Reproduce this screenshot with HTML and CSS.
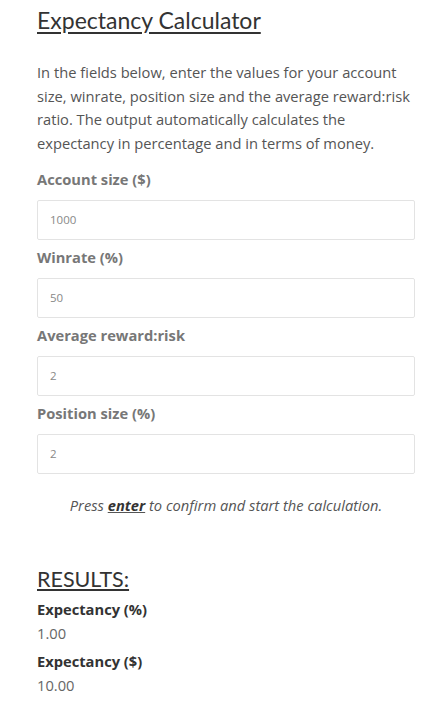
FILE: index.html
```html
<!DOCTYPE html>
<html>
<head>
  <title>Expectancy Calculator</title>
  <meta charset="UTF-8">
  <link rel="stylesheet" href="styles.css">
</head>
<body>
  <div class="container">
    <h1 class="title">Expectancy Calculator</h1>
    <p class="intro">In the fields below, enter the values for your account size, winrate, position size and the average reward:risk ratio. The output automatically calculates the expectancy in percentage and in terms of money.</p>
    <form id="calcForm">
      <label class="field-label" for="account">Account size ($)</label>
      <input type="text" class="field" id="account" value="1000">
      <label class="field-label" for="winrate">Winrate (%)</label>
      <input type="text" class="field" id="winrate" value="50">
      <label class="field-label" for="ratio">Average reward:risk</label>
      <input type="text" class="field" id="ratio" value="2">
      <label class="field-label" for="position">Position size (%)</label>
      <input type="text" class="field" id="position" value="2">
      <p class="hint">Press <u><b>enter</b></u> to confirm and start the calculation.</p>
    </form>
    <h2 class="results-title">RESULTS:</h2>
    <div class="result-label">Expectancy (%)</div>
    <div class="result-value" id="expPct">1.00</div>
    <div class="result-label">Expectancy ($)</div>
    <div class="result-value" id="expMoney">10.00</div>
  </div>

  <script>
    // Recalculate on enter
    document.getElementById('calcForm').addEventListener('submit', function(e) {
      e.preventDefault();
      const account = parseFloat(document.getElementById('account').value) || 0;
      const winrate = (parseFloat(document.getElementById('winrate').value) || 0) / 100;
      const ratio = parseFloat(document.getElementById('ratio').value) || 0;
      const position = parseFloat(document.getElementById('position').value) || 0;
      const pct = (winrate * ratio - (1 - winrate)) * position;
      document.getElementById('expPct').textContent = pct.toFixed(2);
      document.getElementById('expMoney').textContent = (account * pct / 100).toFixed(2);
    });
  </script>
</body>
</html>
```

FILE: styles.css
```css
body {
  font-family: 'Open Sans', 'Noto Sans', sans-serif;
  margin: 0;
  padding: 0;
  background-color: #ffffff;
  color: #555555;
}
.container {
  width: 378px;
  padding-left: 37px;
}
.title {
  font-family: Lato, 'Open Sans', sans-serif;
  font-size: 23px;
  font-weight: normal;
  color: #333333;
  text-decoration: underline;
  text-underline-offset: 3px;
  line-height: 30px;
  margin: 5px 0 0 0;
}
.intro {
  font-size: 14.7px;
  line-height: 23.7px;
  margin: 26px 0 0 0;
}
.field-label {
  display: block;
  font-size: 14.7px;
  font-weight: bold;
  color: #777777;
  line-height: 24px;
  margin: 5px 0 9px 0;
}
.intro + form .field-label:first-child {
  margin-top: 11px;
}
.field {
  display: block;
  box-sizing: border-box;
  width: 100%;
  height: 40px;
  padding: 0 12px;
  border: 1px solid #e3e3e3;
  border-radius: 2px;
  font-family: 'Open Sans', sans-serif;
  font-size: 11.5px;
  color: #888888;
  outline: none;
}
.hint {
  text-align: center;
  font-style: italic;
  font-size: 14.7px;
  line-height: 24px;
  color: #555555;
  margin: 19px 0 0 0;
}
.hint b {
  color: #333333;
}
.results-title {
  font-family: Lato, 'Open Sans', sans-serif;
  font-size: 21.5px;
  font-weight: normal;
  color: #333333;
  text-decoration: underline;
  line-height: 28px;
  margin: 48px 0 0 0;
}
.result-label {
  font-size: 14.7px;
  font-weight: bold;
  color: #333333;
  line-height: 24px;
  margin-top: 4px;
}
.result-value {
  font-size: 14.7px;
  line-height: 24px;
  color: #666666;
}
```
